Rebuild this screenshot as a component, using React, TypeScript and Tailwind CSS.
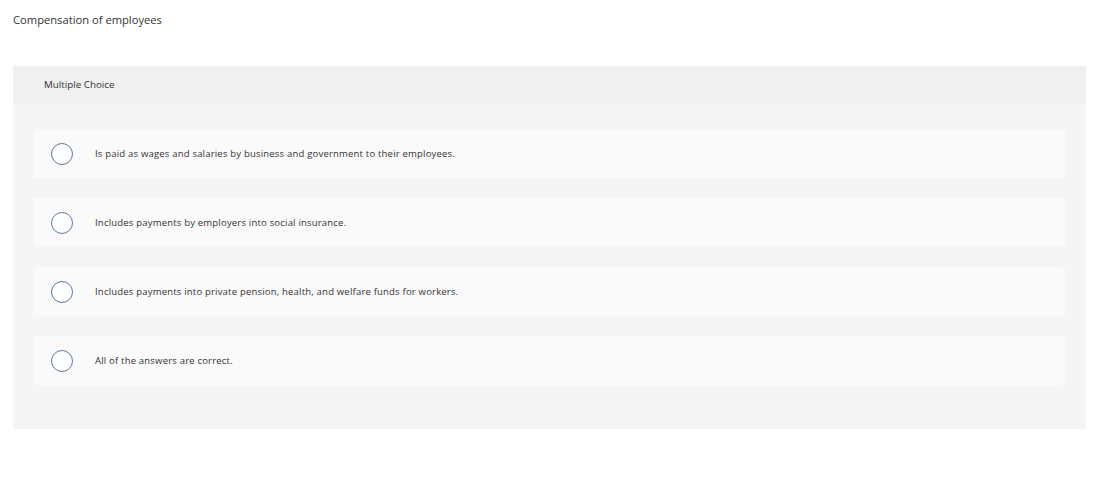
const options = [
  "Is paid as wages and salaries by business and government to their employees.",
  "Includes payments by employers into social insurance.",
  "Includes payments into private pension, health, and welfare funds for workers.",
  "All of the answers are correct.",
];

export default function App() {
  return (
    <div className="min-h-screen bg-white pl-[13px] pr-[15px] pt-[13px] font-['Open_Sans',sans-serif] text-[#333]">
      <div className="h-[14px] text-[11.2px] leading-[14px]">Compensation of employees</div>

      <div className="mt-[39px] bg-[#f5f5f5]">
        {/* header */}
        <div className="flex h-[38px] items-center bg-[#f0f0f0] px-[31px] pt-[1px] text-[9.8px]">
          Multiple Choice
        </div>

        {/* options */}
        <div className="flex flex-col gap-[20px] pb-[44px] pl-[20px] pr-[21px] pt-[25px]">
          {options.map((text) => (
            <div
              key={text}
              className="flex h-[49px] items-center rounded-[2px] bg-[#fafafa] pl-[18px]"
            >
              <span className="h-[22px] w-[22px] shrink-0 rounded-full border-[1.5px] border-[#5e7a96] bg-white" />
              <span className="ml-[22px] pt-[1px] text-[9.5px] tracking-[0.2px]">{text}</span>
            </div>
          ))}
        </div>
      </div>
    </div>
  );
}
